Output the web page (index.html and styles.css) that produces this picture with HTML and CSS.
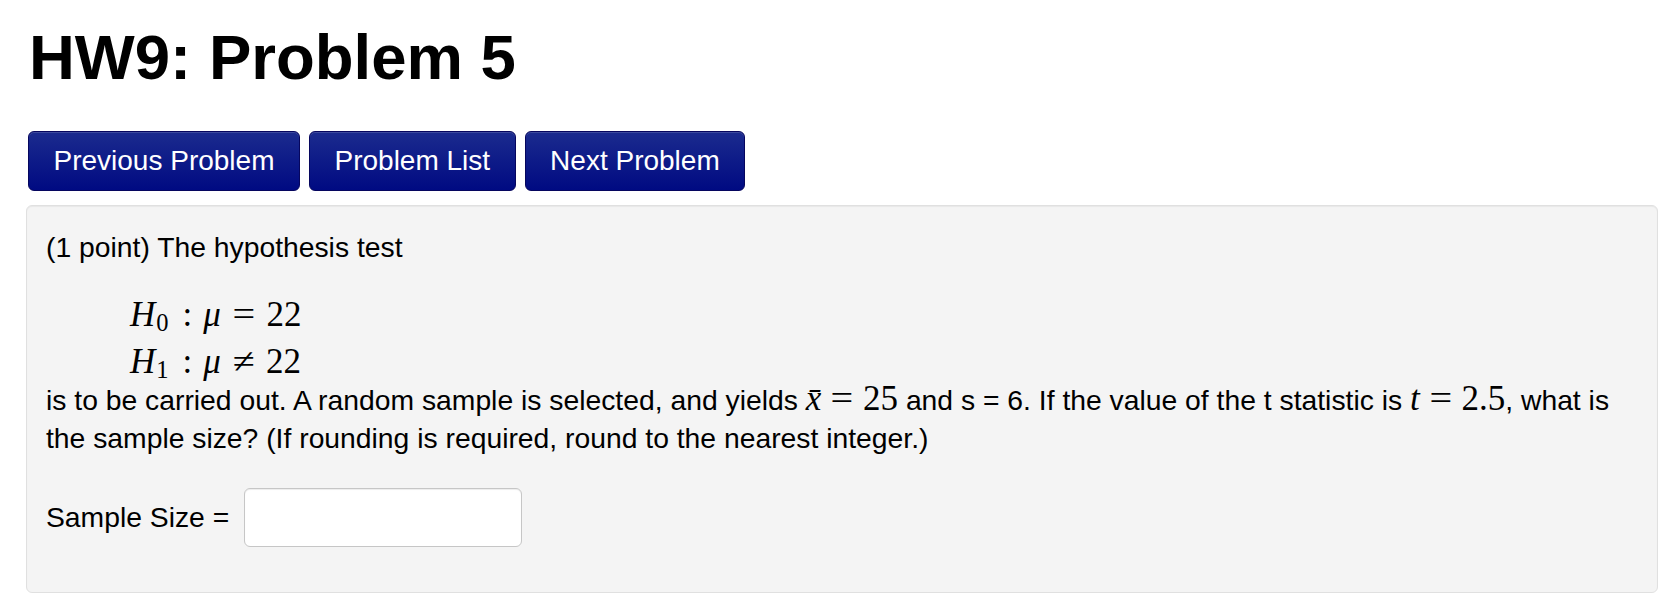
FILE: index.html
```html
<!DOCTYPE html>
<html lang="en">
<head>
  <meta charset="UTF-8">
  <title>HW9: Problem 5</title>
  <link rel="stylesheet" href="styles.css">
</head>
<body>

<h1 class="title">HW9: Problem 5</h1>

<div class="nav">
  <button class="nav-button">Previous Problem</button>
  <button class="nav-button">Problem List</button>
  <button class="nav-button">Next Problem</button>
</div>

<div class="problem">
  <p class="text">(1 point) The hypothesis test</p>

  <div class="display">
    <div class="row"><span class="math"><i class="var">H</i><sub>0</sub><span class="rel">:</span><i>μ</i><span class="rel eq">=</span>22</span></div>
    <div class="row"><span class="math"><i class="var">H</i><sub>1</sub><span class="rel">:</span><i>μ</i><span class="rel eq">≠</span>22</span></div>
  </div>

  <p class="text">is to be carried out. A random sample is selected, and yields <span class="math inline"><i>x&#x0304;</i><span class="rel eq">=</span>25</span> and s = 6. If the value of the t statistic is <span class="math inline"><i>t</i><span class="rel eq">=</span>2.5</span>, what is the sample size? (If rounding is required, round to the nearest integer.)</p>

  <div class="answer">
    <label for="ans">Sample Size =</label>
    <input type="text" id="ans" class="answer-box">
  </div>
</div>

</body>
</html>
```

FILE: styles.css
```css
body { margin: 0; padding: 0 3px 0 26px; font-family: "Liberation Sans", Arial, sans-serif; color: #000; background: #fff; }
.title { margin: 19px 0 0 3px; font-size: 63.5px; line-height: 77px; font-weight: bold; }
.nav { display: flex; gap: 9px; margin: 35px 0 14px 2px; }
.nav-button { font-family: inherit; font-size: 28px; line-height: 32px; color: #fff; padding: 13px 24.5px; border: 1px solid #06065e; border-radius: 6px; background: linear-gradient(#1b2b8e, #000a82); box-shadow: inset 0 1px 0 rgba(255,255,255,0.15); cursor: pointer; }
.problem { background: #f4f4f4; border: 1px solid #e0e0e0; border-radius: 6px; padding: 22px 18px 45px 19px; box-shadow: inset 0 1px 1px rgba(0,0,0,0.05); }
.text { margin: 0; font-size: 28.3px; line-height: 38px; }
.display { margin: 25px 0 -4px 84px; font-family: "Liberation Serif", "Times New Roman", serif; font-size: 35px; }
.row { line-height: 47px; }
.math { font-family: "Liberation Serif", "Times New Roman", serif; font-size: 35px; }
.math i { font-style: italic; }
.var { margin-right: 1px; }
.math sub { font-size: 70%; line-height: 0; vertical-align: -5px; margin-right: 3px; }
.rel { display: inline-block; margin: 0 10px; }
.rel.eq { margin: 0 11px; transform: scaleX(1.15); }
.display .rel { margin: 0 11px; }
.display .rel.eq { margin: 0 13px; }
.inline { line-height: 0; }
.answer { display: flex; align-items: center; gap: 15px; margin-top: 31px; font-size: 28.3px; }
.answer-box { width: 278px; height: 59px; box-sizing: border-box; border: 1px solid #c6c6c6; border-radius: 6px; background: #fff; box-shadow: inset 0 1px 1px rgba(0,0,0,0.075); font-size: 28px; }
```
